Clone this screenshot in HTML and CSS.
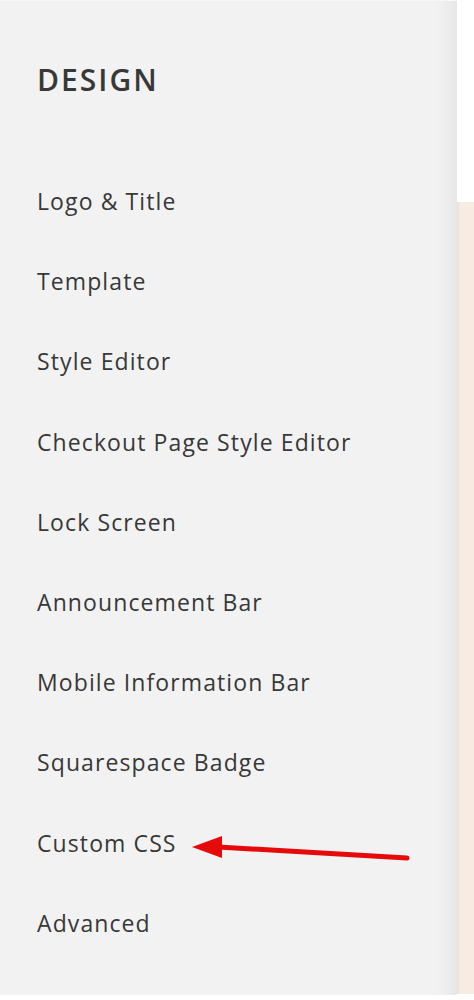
FILE: index.html
```html
<!DOCTYPE html>
<html lang="en">
<head>
    <meta charset="UTF-8">
    <meta name="viewport" content="width=device-width, initial-scale=1.0">
    <title>Design</title>
    <link rel="stylesheet" href="styles.css">
</head>
<body>
    <div class="layout">
        <div class="sidebar">
            <h2>DESIGN</h2>
            <ul class="menu">
                <li>Logo &amp; Title</li>
                <li>Template</li>
                <li>Style Editor</li>
                <li>Checkout Page Style Editor</li>
                <li>Lock Screen</li>
                <li>Announcement Bar</li>
                <li>Mobile Information Bar</li>
                <li>Squarespace Badge</li>
                <li>Custom CSS</li>
                <li>Advanced</li>
            </ul>
            <!-- annotation arrow -->
            <svg class="arrow" width="230" height="30" viewBox="0 0 230 30">
                <line x1="28" y1="11" x2="217" y2="22" stroke="#e60a0a" stroke-width="5" stroke-linecap="round"/>
                <polygon points="2,11 32,0 32,22" fill="#e60a0a"/>
            </svg>
        </div>
        <div class="preview">
            <div class="preview-panel"></div>
        </div>
    </div>
</body>
</html>
```

FILE: styles.css
```css
body {
    margin: 0;
    padding: 0;
    background-color: #ffffff;
    font-family: "Open Sans", "Liberation Sans", sans-serif;
    color: #383838;
}
.layout {
    display: flex;
    height: 1000px;
}
.sidebar {
    position: relative;
    width: 457px;
    height: 995px;
    padding: 39px 0 0 37px;
    box-sizing: border-box;
    flex-shrink: 0;
    background-color: #f2f2f2;
    border-top: 1px solid #f7f7f7;
    box-shadow: inset -24px 0 22px -20px rgba(0, 0, 0, 0.07);
}
.sidebar h2 {
    margin: 0;
    font-size: 30px;
    line-height: 80px;
    font-weight: 600;
    letter-spacing: 2px;
}
.menu {
    list-style: none;
    margin: 41px 0 0 0;
    padding: 0;
}
.menu li {
    font-size: 23px;
    line-height: 80.2px;
    letter-spacing: 1.1px;
}
.arrow {
    position: absolute;
    left: 190px;
    top: 835px;
}
.preview {
    flex-grow: 1;
    padding-top: 202px;
}
.preview-panel {
    height: 792px;
    background-color: #f8ebe2;
    border-left: 2px solid #f1e0d6;
}
```
